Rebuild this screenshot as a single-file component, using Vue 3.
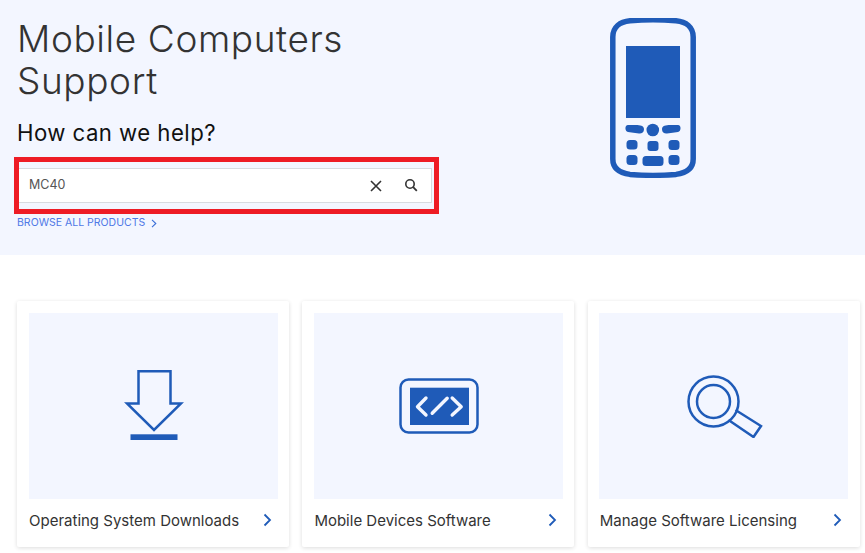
<script setup>
const cards = [
  { label: 'Operating System Downloads', icon: 'download' },
  { label: 'Mobile Devices Software', icon: 'code' },
  { label: 'Manage Software Licensing', icon: 'lens' }
]
</script>

<template>
  <div class="page">
    <section class="hero">
      <div class="intro">
        <h1>Mobile Computers<br />Support</h1>
        <h2>How can we help?</h2>
        <div class="highlight">
          <div class="search">
            <span class="value">MC40</span>
            <svg class="clear" width="14" height="14" viewBox="0 0 14 14"><path d="M2 2l10 10M12 2L2 12" fill="none" stroke="#333" stroke-width="1.6" /></svg>
            <svg class="go" width="14" height="14" viewBox="0 0 14 14"><circle cx="6" cy="6" r="4.2" fill="none" stroke="#333" stroke-width="1.6" /><path d="M9.2 9.2l3.6 3.6" fill="none" stroke="#333" stroke-width="1.8" /></svg>
          </div>
        </div>
        <a class="browse">BROWSE ALL PRODUCTS
          <svg width="6" height="9" viewBox="0 0 6 9"><path d="M1 .8l3.8 3.7L1 8.2" fill="none" stroke="#3a6fd8" stroke-width="1.1" /></svg>
        </a>
      </div>
      <svg class="phone" width="86" height="160" viewBox="0 0 86 160">
        <path d="M20 2.800C32 1.800 54 1.800 66 2.800 76 3.800 83.200 9 83.200 19V141C83.200 151 76 155 66 156.400 54 157.600 32 157.600 20 156.400 10 155 2.800 151 2.800 141V19C2.800 9 10 3.800 20 2.800Z" fill="none" stroke="#1f5bb8" stroke-width="5.500" />
        <rect x="16" y="28" width="54" height="72" fill="#1f5bb8" />
        <g fill="#1f5bb8">
          <path d="M18 107h8c4 0 8 .6 8 4.200 0 3.300-2.500 4.600-5 4.300-4-.4-7.500-1-11-1.500-3.300-.5-3.500-7 0-7Z" />
          <circle cx="42.800" cy="112" r="6.300" />
          <path d="M68 107h-8c-4 0-8 .6-8 4.200 0 3.300 2.500 4.600 5 4.300 4-.4 7.500-1 11-1.500 3.300-.5 3.500-7 0-7Z" />
          <rect x="16.500" y="122" width="11" height="9.500" rx="3.500" />
          <rect x="37.500" y="123" width="11" height="10" rx="3" />
          <rect x="58.500" y="122" width="11" height="10" rx="3.500" />
          <rect x="16.500" y="137" width="11" height="10" rx="3.500" />
          <rect x="32.500" y="138" width="21" height="10" rx="3.500" />
          <rect x="58.500" y="137" width="11" height="10" rx="3.500" />
        </g>
      </svg>
    </section>

    <section class="cards">
      <article v-for="card in cards" :key="card.label" class="card">
        <div class="art">
          <svg v-if="card.icon === 'download'" width="60" height="72" viewBox="0 0 60 72">
            <path d="M14.500 1.300h32V33.500H57L30 60 3 33.500h11.500Z" fill="none" stroke="#1f5bb8" stroke-width="2.500" />
            <rect x="6.500" y="64.300" width="47" height="5.700" fill="#1f5bb8" />
          </svg>
          <svg v-else-if="card.icon === 'code'" width="80" height="56" viewBox="0 0 80 56">
            <rect x="1.500" y="1.500" width="77" height="53" rx="8" fill="none" stroke="#1f5bb8" stroke-width="2.500" />
            <rect x="11" y="9.700" width="59" height="37.300" fill="#1f5bb8" />
            <path d="M27 20l-8.500 8.700L27 37M53.200 20l9 8.700-9 8.300M33.200 35.300l15-15" fill="none" stroke="#f3f6ff" stroke-width="3.400" stroke-linecap="round" stroke-linejoin="round" />
          </svg>
          <svg v-else width="78" height="64" viewBox="0 0 78 64">
            <circle cx="28.500" cy="27.500" r="25" fill="none" stroke="#1f5bb8" stroke-width="2.500" />
            <circle cx="28.500" cy="27.500" r="16.500" fill="none" stroke="#1f5bb8" stroke-width="2.500" />
            <path d="M50.500 36L76 52l-7.500 11-25-17" fill="none" stroke="#1f5bb8" stroke-width="2.500" />
          </svg>
        </div>
        <div class="foot">
          <span>{{ card.label }}</span>
          <svg width="9" height="14" viewBox="0 0 9 14"><path d="M1.500 1.500L7 7l-5.500 5.500" fill="none" stroke="#1f5bb8" stroke-width="1.800" /></svg>
        </div>
      </article>
    </section>
  </div>
</template>

<style scoped>
.page {
  width: 865px;
  height: 553px;
  overflow: hidden;
  background: #fff;
  font-family: Inter, "Liberation Sans", sans-serif;
  color: #333;
}
.hero {
  height: 255px;
  box-sizing: border-box;
  background: #f3f6ff;
  display: flex;
  align-items: flex-start;
  padding: 18px 0 0 14px;
}
.intro {
  width: 425px;
}
h1 {
  margin: 0 0 0 3px;
  font-size: 37px;
  line-height: 42px;
  font-weight: 300;
  letter-spacing: .6px;
  color: #333;
}
h2 {
  margin: 17px 0 0 3px;
  font-size: 22.200px;
  line-height: 28px;
  font-weight: 400;
  letter-spacing: .45px;
  color: #111;
}
.highlight {
  margin-top: 10px;
  height: 57px;
  box-sizing: border-box;
  border: 5px solid #ee1c25;
  padding: 6px 2px 0 0;
}
.search {
  height: 35px;
  box-sizing: border-box;
  background: #fff;
  border: 1px solid #d8dbe0;
  border-left: 0;
  display: flex;
  align-items: center;
  padding: 0 13px 0 10px;
}
.value {
  flex: 1;
  font-size: 12.500px;
  margin-bottom: 2px;
  color: #555;
}
.clear {
  margin: 0 21px 0 0;
}
.go {
  margin-bottom: 2px;
}
.browse {
  display: block;
  margin: 2px 0 0 3px;
  font-size: 10.500px;
  line-height: 14px;
  color: #4f78e6;
}
.browse svg {
  margin-left: 3px;
  vertical-align: -2px;
}
.phone {
  margin-left: 171px;
  flex: none;
}
.cards {
  display: flex;
  gap: 13.400px;
  padding: 46px 0 0 17px;
}
.card {
  width: 272px;
  height: 246px;
  box-sizing: border-box;
  padding: 12px 11.500px 0;
  background: #fff;
  border-radius: 2px;
  box-shadow: 0 1px 4px rgba(0, 0, 0, .14);
}
.art {
  height: 186px;
  box-sizing: border-box;
  padding-left: 1px;
  background: #f3f6ff;
  display: flex;
  align-items: center;
  justify-content: center;
}
.foot {
  display: flex;
  align-items: center;
  justify-content: space-between;
  padding: 11px 6px 0 .5px;
  height: 20px;
  font-size: 15px;
  color: #333;
}
</style>
